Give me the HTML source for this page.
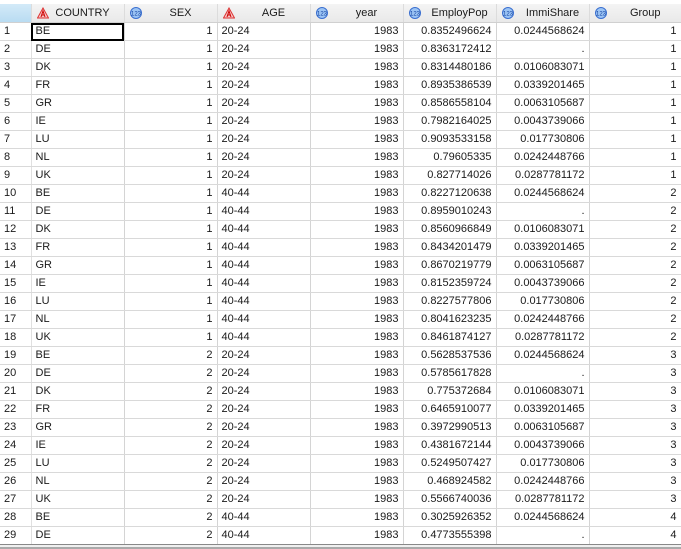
<!DOCTYPE html><html><head><style>
body{margin:0;width:681px;height:549px;overflow:hidden;background:#fff;font-family:"Liberation Sans",Arial,sans-serif;font-size:11px;color:#1a1a1a;position:relative}
table{border-collapse:collapse;table-layout:fixed;position:absolute;left:0;top:4px;width:681px}
td{height:17px;padding:0;border-right:1px solid #d4d4d4;border-bottom:1px solid #d9d9d9;white-space:nowrap;overflow:hidden;line-height:17px}
td.n{text-align:right;padding-right:4px}
td.c{padding-left:4px}
td.r{padding-left:4px;border-right:1px solid #e0e0e0}
tr.h td{height:18px;background:linear-gradient(#f4f4f4,#e9e9e9);border-right:1px solid #dcdcdc;border-bottom:1px solid #d0d0d0;position:relative}
tr.h td.rh{background:linear-gradient(#d3eaf8,#b9dcf2)}
.ic{position:absolute;left:5px;top:3px;width:12px;height:12px}
.ht{position:absolute;left:20px;right:0;text-align:center;top:0;line-height:18px}
.sel{outline:2px solid #000;outline-offset:-2px}
.bot{position:absolute;left:0;right:0;top:544px;height:5px;background:linear-gradient(#888 0,#888 1px,#f0f0f0 1px,#f0f0f0 3px,#aaa 3px)}
</style></head><body>
<table>
<colgroup><col style="width:31px"><col style="width:93px"><col style="width:93px"><col style="width:93px"><col style="width:93px"><col style="width:93px"><col style="width:93px"><col style="width:92px"></colgroup>
<tr class="h"><td class="rh"></td>
<td><svg class="ic" viewBox="0 0 12 12"><path d="M6 1L11.5 11H0.5Z" fill="#f7c6c6" stroke="#d33" /><path d="M4 10L6 4L8 10M4.7 8H7.3" fill="none" stroke="#c00" stroke-width="1"/></svg><span class="ht" style="left:10px">COUNTRY</span></td>
<td><svg class="ic" viewBox="0 0 12 12"><circle cx="6" cy="6" r="5.5" fill="#9cc4f4" stroke="#3a6fd0"/><text x="6" y="8.5" font-size="6" text-anchor="middle" fill="#1040a0" font-family="Liberation Sans">123</text></svg><span class="ht">SEX</span></td>
<td><svg class="ic" viewBox="0 0 12 12"><path d="M6 1L11.5 11H0.5Z" fill="#f7c6c6" stroke="#d33" /><path d="M4 10L6 4L8 10M4.7 8H7.3" fill="none" stroke="#c00" stroke-width="1"/></svg><span class="ht">AGE</span></td>
<td><svg class="ic" viewBox="0 0 12 12"><circle cx="6" cy="6" r="5.5" fill="#9cc4f4" stroke="#3a6fd0"/><text x="6" y="8.5" font-size="6" text-anchor="middle" fill="#1040a0" font-family="Liberation Sans">123</text></svg><span class="ht">year</span></td>
<td><svg class="ic" viewBox="0 0 12 12"><circle cx="6" cy="6" r="5.5" fill="#9cc4f4" stroke="#3a6fd0"/><text x="6" y="8.5" font-size="6" text-anchor="middle" fill="#1040a0" font-family="Liberation Sans">123</text></svg><span class="ht">EmployPop</span></td>
<td><svg class="ic" viewBox="0 0 12 12"><circle cx="6" cy="6" r="5.5" fill="#9cc4f4" stroke="#3a6fd0"/><text x="6" y="8.5" font-size="6" text-anchor="middle" fill="#1040a0" font-family="Liberation Sans">123</text></svg><span class="ht">ImmiShare</span></td>
<td style="border-right:none"><svg class="ic" viewBox="0 0 12 12"><circle cx="6" cy="6" r="5.5" fill="#9cc4f4" stroke="#3a6fd0"/><text x="6" y="8.5" font-size="6" text-anchor="middle" fill="#1040a0" font-family="Liberation Sans">123</text></svg><span class="ht">Group</span></td></tr>
<tr><td class="r">1</td><td class="c sel">BE</td><td class="n">1</td><td class="c">20-24</td><td class="n">1983</td><td class="n">0.8352496624</td><td class="n">0.0244568624</td><td class="n">1</td></tr>
<tr><td class="r">2</td><td class="c">DE</td><td class="n">1</td><td class="c">20-24</td><td class="n">1983</td><td class="n">0.8363172412</td><td class="n">.</td><td class="n">1</td></tr>
<tr><td class="r">3</td><td class="c">DK</td><td class="n">1</td><td class="c">20-24</td><td class="n">1983</td><td class="n">0.8314480186</td><td class="n">0.0106083071</td><td class="n">1</td></tr>
<tr><td class="r">4</td><td class="c">FR</td><td class="n">1</td><td class="c">20-24</td><td class="n">1983</td><td class="n">0.8935386539</td><td class="n">0.0339201465</td><td class="n">1</td></tr>
<tr><td class="r">5</td><td class="c">GR</td><td class="n">1</td><td class="c">20-24</td><td class="n">1983</td><td class="n">0.8586558104</td><td class="n">0.0063105687</td><td class="n">1</td></tr>
<tr><td class="r">6</td><td class="c">IE</td><td class="n">1</td><td class="c">20-24</td><td class="n">1983</td><td class="n">0.7982164025</td><td class="n">0.0043739066</td><td class="n">1</td></tr>
<tr><td class="r">7</td><td class="c">LU</td><td class="n">1</td><td class="c">20-24</td><td class="n">1983</td><td class="n">0.9093533158</td><td class="n">0.017730806</td><td class="n">1</td></tr>
<tr><td class="r">8</td><td class="c">NL</td><td class="n">1</td><td class="c">20-24</td><td class="n">1983</td><td class="n">0.79605335</td><td class="n">0.0242448766</td><td class="n">1</td></tr>
<tr><td class="r">9</td><td class="c">UK</td><td class="n">1</td><td class="c">20-24</td><td class="n">1983</td><td class="n">0.827714026</td><td class="n">0.0287781172</td><td class="n">1</td></tr>
<tr><td class="r">10</td><td class="c">BE</td><td class="n">1</td><td class="c">40-44</td><td class="n">1983</td><td class="n">0.8227120638</td><td class="n">0.0244568624</td><td class="n">2</td></tr>
<tr><td class="r">11</td><td class="c">DE</td><td class="n">1</td><td class="c">40-44</td><td class="n">1983</td><td class="n">0.8959010243</td><td class="n">.</td><td class="n">2</td></tr>
<tr><td class="r">12</td><td class="c">DK</td><td class="n">1</td><td class="c">40-44</td><td class="n">1983</td><td class="n">0.8560966849</td><td class="n">0.0106083071</td><td class="n">2</td></tr>
<tr><td class="r">13</td><td class="c">FR</td><td class="n">1</td><td class="c">40-44</td><td class="n">1983</td><td class="n">0.8434201479</td><td class="n">0.0339201465</td><td class="n">2</td></tr>
<tr><td class="r">14</td><td class="c">GR</td><td class="n">1</td><td class="c">40-44</td><td class="n">1983</td><td class="n">0.8670219779</td><td class="n">0.0063105687</td><td class="n">2</td></tr>
<tr><td class="r">15</td><td class="c">IE</td><td class="n">1</td><td class="c">40-44</td><td class="n">1983</td><td class="n">0.8152359724</td><td class="n">0.0043739066</td><td class="n">2</td></tr>
<tr><td class="r">16</td><td class="c">LU</td><td class="n">1</td><td class="c">40-44</td><td class="n">1983</td><td class="n">0.8227577806</td><td class="n">0.017730806</td><td class="n">2</td></tr>
<tr><td class="r">17</td><td class="c">NL</td><td class="n">1</td><td class="c">40-44</td><td class="n">1983</td><td class="n">0.8041623235</td><td class="n">0.0242448766</td><td class="n">2</td></tr>
<tr><td class="r">18</td><td class="c">UK</td><td class="n">1</td><td class="c">40-44</td><td class="n">1983</td><td class="n">0.8461874127</td><td class="n">0.0287781172</td><td class="n">2</td></tr>
<tr><td class="r">19</td><td class="c">BE</td><td class="n">2</td><td class="c">20-24</td><td class="n">1983</td><td class="n">0.5628537536</td><td class="n">0.0244568624</td><td class="n">3</td></tr>
<tr><td class="r">20</td><td class="c">DE</td><td class="n">2</td><td class="c">20-24</td><td class="n">1983</td><td class="n">0.5785617828</td><td class="n">.</td><td class="n">3</td></tr>
<tr><td class="r">21</td><td class="c">DK</td><td class="n">2</td><td class="c">20-24</td><td class="n">1983</td><td class="n">0.775372684</td><td class="n">0.0106083071</td><td class="n">3</td></tr>
<tr><td class="r">22</td><td class="c">FR</td><td class="n">2</td><td class="c">20-24</td><td class="n">1983</td><td class="n">0.6465910077</td><td class="n">0.0339201465</td><td class="n">3</td></tr>
<tr><td class="r">23</td><td class="c">GR</td><td class="n">2</td><td class="c">20-24</td><td class="n">1983</td><td class="n">0.3972990513</td><td class="n">0.0063105687</td><td class="n">3</td></tr>
<tr><td class="r">24</td><td class="c">IE</td><td class="n">2</td><td class="c">20-24</td><td class="n">1983</td><td class="n">0.4381672144</td><td class="n">0.0043739066</td><td class="n">3</td></tr>
<tr><td class="r">25</td><td class="c">LU</td><td class="n">2</td><td class="c">20-24</td><td class="n">1983</td><td class="n">0.5249507427</td><td class="n">0.017730806</td><td class="n">3</td></tr>
<tr><td class="r">26</td><td class="c">NL</td><td class="n">2</td><td class="c">20-24</td><td class="n">1983</td><td class="n">0.468924582</td><td class="n">0.0242448766</td><td class="n">3</td></tr>
<tr><td class="r">27</td><td class="c">UK</td><td class="n">2</td><td class="c">20-24</td><td class="n">1983</td><td class="n">0.5566740036</td><td class="n">0.0287781172</td><td class="n">3</td></tr>
<tr><td class="r">28</td><td class="c">BE</td><td class="n">2</td><td class="c">40-44</td><td class="n">1983</td><td class="n">0.3025926352</td><td class="n">0.0244568624</td><td class="n">4</td></tr>
<tr><td class="r">29</td><td class="c">DE</td><td class="n">2</td><td class="c">40-44</td><td class="n">1983</td><td class="n">0.4773555398</td><td class="n">.</td><td class="n">4</td></tr>
</table>
<div class="bot"></div>
</body></html>
